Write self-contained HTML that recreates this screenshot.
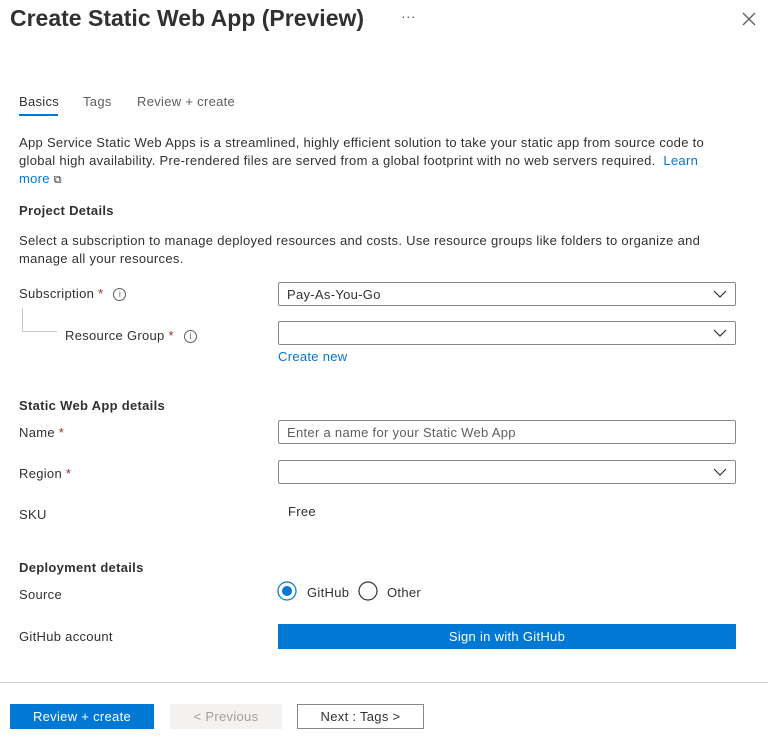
<!DOCTYPE html>
<html><head><meta charset="utf-8"><style>
body{margin:0;width:768px;height:739px;background:#fff;font-family:"Liberation Sans",sans-serif;color:#323130;font-size:13px;letter-spacing:0.3px;position:relative;overflow:hidden}
.a{position:absolute;white-space:nowrap}
.req{color:#a4262c}
.box{position:absolute;left:278px;width:456px;border:1px solid #8a8886;border-radius:2px;background:#fff}
.chev{position:absolute;right:8px;top:7px}
.info{display:inline-block;width:11px;height:11px;border:1px solid #605e5c;border-radius:50%;font-size:9px;text-align:center;line-height:11px;color:#605e5c;vertical-align:1px;margin-left:10px;letter-spacing:0}
.b{font-weight:bold}
.link{color:#0078d4}
</style></head><body>
<div class="a" style="left:10px;top:5px;font-size:23px;font-weight:bold;color:#323130;letter-spacing:0">Create Static Web App (Preview)</div>
<div class="a" style="left:401px;top:8px;font-size:14px;color:#605e5c">···</div>
<svg class="a" style="left:742px;top:12px" width="14" height="14"><path d="M1 1L13 13M13 1L1 13" stroke="#605e5c" stroke-width="1.3"/></svg>

<div class="a" style="left:19px;top:94px;color:#323130">Basics</div>
<div style="position:absolute;left:19px;top:114px;width:39px;height:2px;background:#0078d4"></div>
<div class="a" style="left:83px;top:94px;color:#605e5c">Tags</div>
<div class="a" style="left:137px;top:94px;color:#605e5c">Review + create</div>

<div class="a" style="left:19px;top:134px;line-height:18px">App Service Static Web Apps is a streamlined, highly efficient solution to take your static app from source code to<br>global high availability. Pre-rendered files are served from a global footprint with no web servers required. &nbsp;<span class="link">Learn</span><br><span class="link">more</span> <span style="font-size:11px">&#x29C9;</span></div>

<div class="a b" style="left:19px;top:203px">Project Details</div>
<div class="a" style="left:19px;top:232px;line-height:18px">Select a subscription to manage deployed resources and costs. Use resource groups like folders to organize and<br>manage all your resources.</div>

<div class="a" style="left:19px;top:286px">Subscription <span class="req">*</span><span class="info">i</span></div>
<div style="position:absolute;left:22px;top:308px;width:34px;height:23px;border-left:1px solid #c8c6c4;border-bottom:1px solid #c8c6c4"></div>
<div class="a" style="left:65px;top:328px">Resource Group <span class="req">*</span><span class="info">i</span></div>
<div class="box" style="top:282px;height:22px"><span class="a" style="left:8px;top:4px">Pay-As-You-Go</span><svg class="chev" width="14" height="8"><path d="M1 1L7 7L13 1" fill="none" stroke="#323130" stroke-width="1.2"/></svg></div>
<div class="box" style="top:321px;height:22px"><svg class="chev" width="14" height="8"><path d="M1 1L7 7L13 1" fill="none" stroke="#323130" stroke-width="1.2"/></svg></div>
<div class="a link" style="left:278px;top:349px">Create new</div>

<div class="a b" style="left:19px;top:398px">Static Web App details</div>
<div class="a" style="left:19px;top:425px">Name <span class="req">*</span></div>
<div class="box" style="top:420px;height:22px"><span class="a" style="left:8px;top:4px;color:#605e5c">Enter a name for your Static Web App</span></div>
<div class="a" style="left:19px;top:466px">Region <span class="req">*</span></div>
<div class="box" style="top:460px;height:22px"><svg class="chev" width="14" height="8"><path d="M1 1L7 7L13 1" fill="none" stroke="#323130" stroke-width="1.2"/></svg></div>
<div class="a" style="left:19px;top:507px">SKU</div>
<div class="a" style="left:288px;top:504px">Free</div>

<div class="a b" style="left:19px;top:560px">Deployment details</div>
<div class="a" style="left:19px;top:587px">Source</div>
<svg class="a" style="left:277px;top:581px" width="20" height="20"><circle cx="10" cy="10" r="9" fill="none" stroke="#0078d4" stroke-width="1.2"/><circle cx="10" cy="10" r="5" fill="#0078d4"/></svg>
<div class="a" style="left:307px;top:585px">GitHub</div>
<svg class="a" style="left:358px;top:581px" width="20" height="20"><circle cx="10" cy="10" r="9" fill="none" stroke="#323130" stroke-width="1.2"/></svg>
<div class="a" style="left:387px;top:585px">Other</div>
<div class="a" style="left:19px;top:629px">GitHub account</div>
<div class="a" style="left:278px;top:624px;width:458px;height:25px;background:#0078d4;color:#fff;text-align:center;line-height:25px">Sign in with GitHub</div>

<div style="position:absolute;left:0;top:682px;width:768px;height:1px;background:#d2d0ce"></div>
<div class="a" style="left:10px;top:704px;width:144px;height:25px;background:#0078d4;color:#fff;text-align:center;line-height:25px">Review + create</div>
<div class="a" style="left:170px;top:704px;width:112px;height:25px;background:#f3f2f1;color:#a19f9d;text-align:center;line-height:25px">&lt; Previous</div>
<div class="a" style="left:297px;top:704px;width:125px;height:23px;border:1px solid #8a8886;text-align:center;line-height:23px;color:#323130">Next : Tags &gt;</div>
</body></html>
